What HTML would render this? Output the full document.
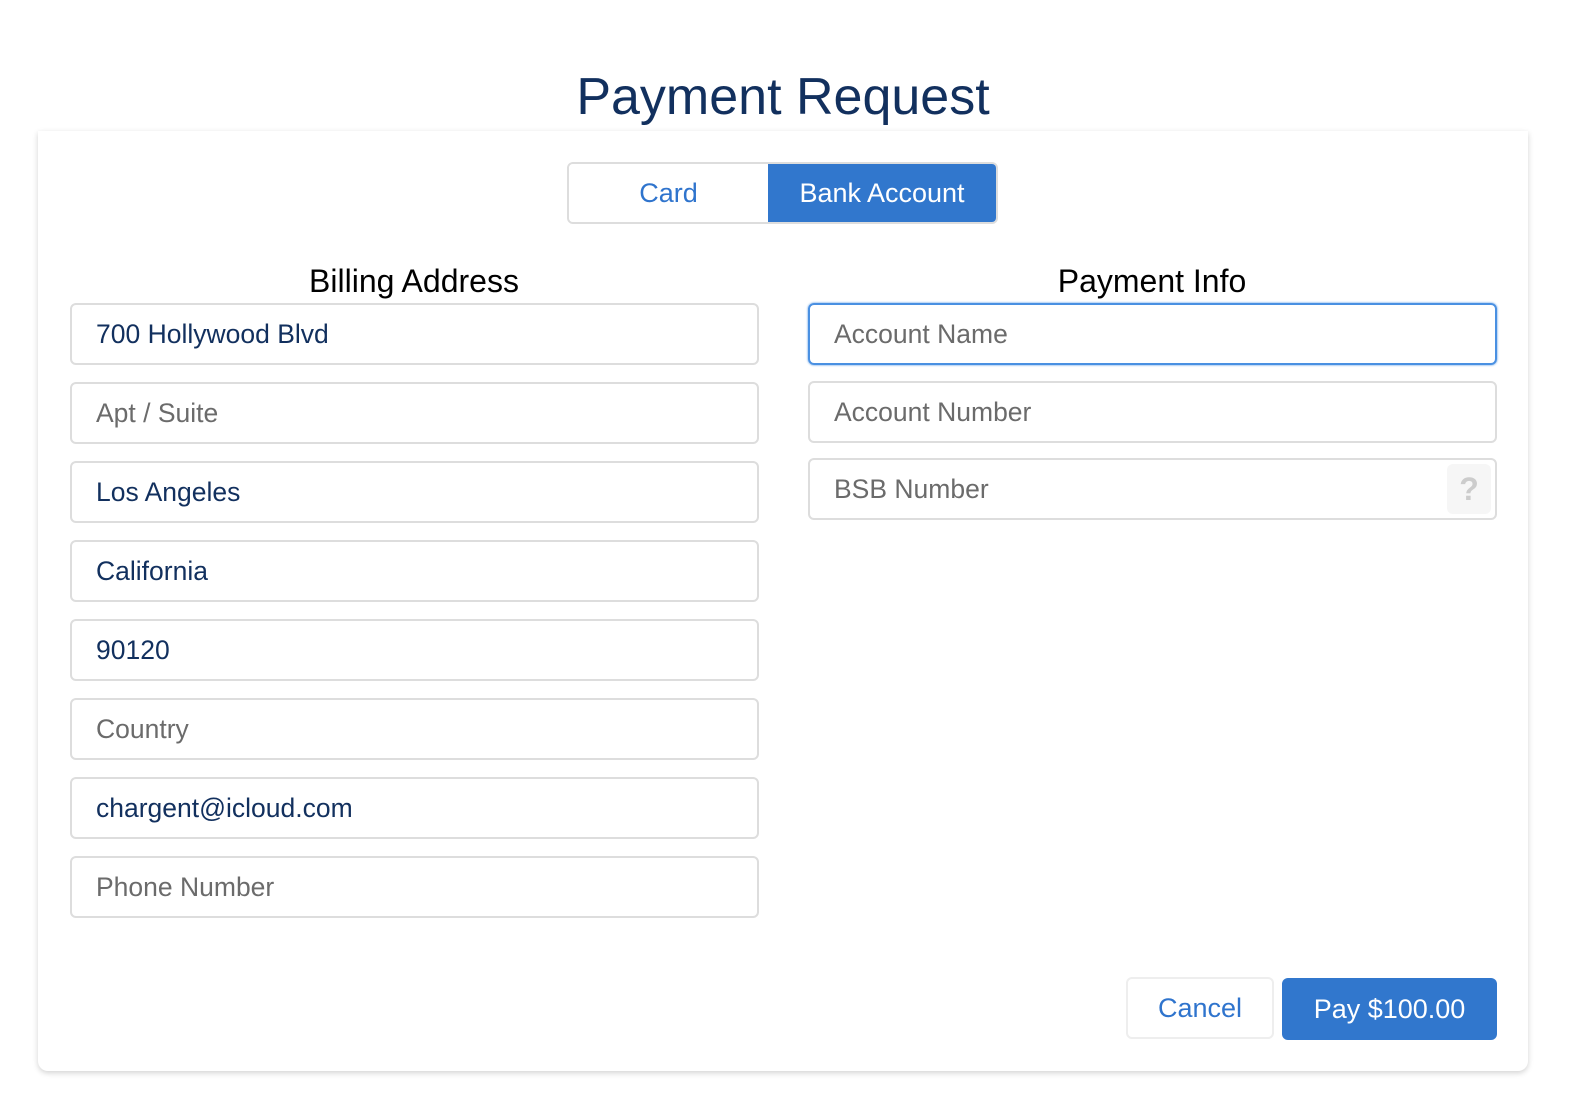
<!DOCTYPE html>
<html><head><meta charset="utf-8"><style>
*{box-sizing:border-box;margin:0;padding:0}
body{width:1590px;height:1112px;background:#fff;font-family:"Liberation Sans",sans-serif;position:relative;overflow:hidden}
.card{position:absolute;left:38px;top:131px;width:1490px;height:940px;background:#fff;border-radius:0 0 10px 10px;box-shadow:0 2px 6px rgba(0,0,0,.18)}
h1{position:absolute;left:0;width:1566px;top:67px;text-align:center;font-weight:normal;font-size:52px;color:#12305e;z-index:2}
.tabs{position:absolute;left:567px;top:162px;width:431px;height:62px;border:2px solid #ddd;border-radius:6px;overflow:hidden;display:flex}
.tabs div{display:flex;align-items:center;justify-content:center;font-size:27px}
.t1{width:199px;color:#2f74cd;background:#fff}
.t2{flex:1;background:#3177cd;color:#fff}
.h{position:absolute;font-size:32px;color:#000;text-align:center;width:688px}
.in{position:absolute;width:689px;height:62px;border:2px solid #ddd;border-radius:6px;font-size:26.5px;padding-left:24px;display:flex;align-items:center;color:#6b6b6b}
.v{color:#12305e}
.focus{border-color:#4a90e2;box-shadow:0 0 2px #4a90e2}
.q{position:absolute;right:4px;top:4px;width:44px;height:50px;background:#f6f6f6;border-radius:6px;color:#ccc;font-weight:bold;font-size:32px;display:flex;align-items:center;justify-content:center}
.btn{position:absolute;height:62px;border-radius:6px;font-size:27px;display:flex;align-items:center;justify-content:center}
</style></head><body>
<h1>Payment Request</h1>
<div class="card"></div>
<div class="tabs"><div class="t1">Card</div><div class="t2">Bank Account</div></div>
<div class="h" style="left:70px;top:263px">Billing Address</div>
<div class="h" style="left:808px;top:263px">Payment Info</div>
<div class="in v" style="left:70px;top:303px">700 Hollywood Blvd</div>
<div class="in" style="left:70px;top:382px">Apt / Suite</div>
<div class="in v" style="left:70px;top:461px">Los Angeles</div>
<div class="in v" style="left:70px;top:540px">California</div>
<div class="in v" style="left:70px;top:619px">90120</div>
<div class="in" style="left:70px;top:698px">Country</div>
<div class="in v" style="left:70px;top:777px">chargent@icloud.com</div>
<div class="in" style="left:70px;top:856px">Phone Number</div>
<div class="in focus" style="left:808px;top:303px">Account Name</div>
<div class="in" style="left:808px;top:381px">Account Number</div>
<div class="in" style="left:808px;top:458px">BSB Number<div class="q">?</div></div>
<div class="btn" style="left:1126px;top:977px;width:148px;border:2px solid #eee;color:#2f74cd">Cancel</div>
<div class="btn" style="left:1282px;top:978px;width:215px;background:#3177cd;color:#fff">Pay $100.00</div>
</body></html>
